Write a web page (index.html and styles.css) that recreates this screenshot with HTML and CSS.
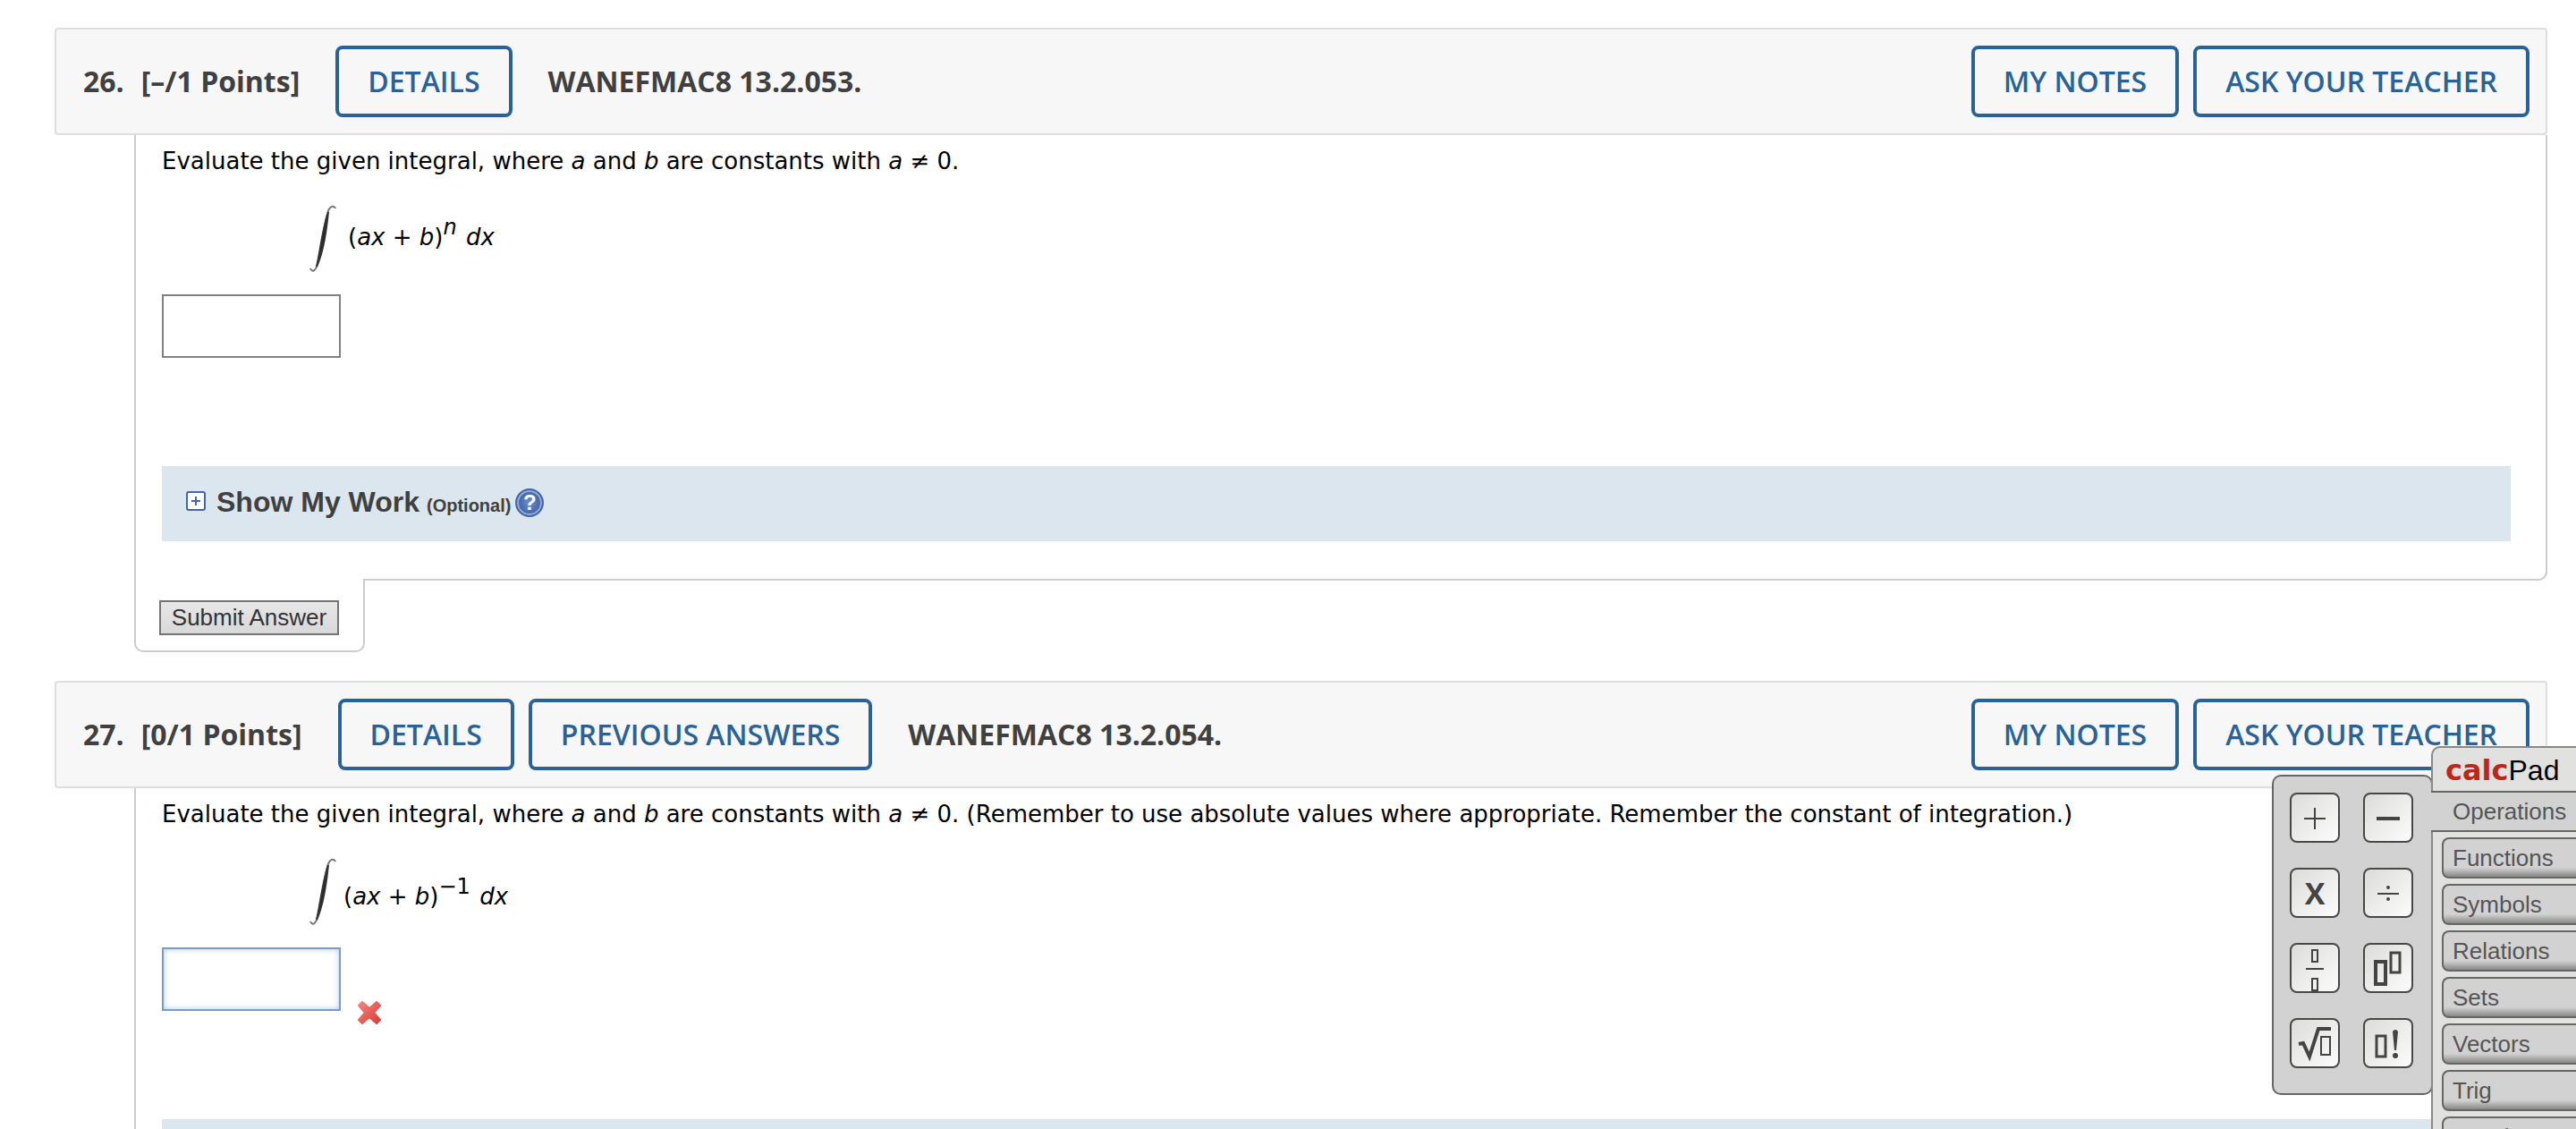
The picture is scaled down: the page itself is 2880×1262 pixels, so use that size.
FILE: index.html
```html
<!DOCTYPE html>
<html lang="en">
<head>
    <meta charset="UTF-8">
    <meta name="viewport" content="width=device-width, initial-scale=1.0">
    <title>Assignment</title>
    <link rel="stylesheet" href="styles.css">
</head>
<body>

<main class="assignment">
    <section class="question">
        <header class="question-header">
            <span class="number">26.</span>
            <span class="points">[–/1 Points]</span>
            <div class="button-group">
                <button type="button" class="btn">DETAILS</button>
            </div>
            <span class="source">WANEFMAC8 13.2.053.</span>
            <div class="button-group right">
                <button type="button" class="btn">MY NOTES</button>
                <button type="button" class="btn">ASK YOUR TEACHER</button>
            </div>
        </header>
        <div class="question-body">
            <p class="prompt">Evaluate the given integral, where <i>a</i> and <i>b</i> are constants with <i>a</i> ≠ 0.</p>
            <div class="formula">
                <svg class="integral" viewBox="0 0 30 76" aria-hidden="true">
                    <path d="M1 71 C3 76 7 74 9 66 C13 50 16 25 20 10 C22 1 27 0 29 4" fill="none" stroke="#777" stroke-width="2"/>
                    <path d="M8 69 C12 52 15 24 21 8 C19 28 16 52 8 69 Z" fill="#222" stroke="#333" stroke-width="2"/>
                </svg>
                <span>(<i>ax</i> + <i>b</i>)<sup><i>n</i></sup> <i>dx</i></span>
            </div>
            <div class="answer-row">
                <input type="text" class="answer" id="answer26" aria-label="Answer 26">
            </div>
            <div class="show-work">
                <button type="button" class="expand" aria-label="Expand">
                    <svg viewBox="0 0 22 22"><rect x="1" y="1" width="20" height="20" rx="2" fill="#fff" stroke="#4269a5" stroke-width="2"/><path d="M6 11h10M11 6v10" stroke="#4269a5" stroke-width="2"/></svg>
                </button>
                <span class="work-title">Show My Work</span>
                <span class="optional">(Optional)</span>
                <button type="button" class="help" aria-label="Help">?</button>
            </div>
        </div>
        <div class="submit-row">
            <div class="submit-tab">
                <button type="submit" class="submit">Submit Answer</button>
            </div>
            <div class="submit-rest"></div>
        </div>
    </section>

    <section class="question">
        <header class="question-header">
            <span class="number">27.</span>
            <span class="points">[0/1 Points]</span>
            <div class="button-group">
                <button type="button" class="btn">DETAILS</button>
                <button type="button" class="btn">PREVIOUS ANSWERS</button>
            </div>
            <span class="source">WANEFMAC8 13.2.054.</span>
            <div class="button-group right">
                <button type="button" class="btn">MY NOTES</button>
                <button type="button" class="btn">ASK YOUR TEACHER</button>
            </div>
        </header>
        <div class="question-body">
            <p class="prompt">Evaluate the given integral, where <i>a</i> and <i>b</i> are constants with <i>a</i> ≠ 0. (Remember to use absolute values where appropriate. Remember the constant of integration.)</p>
            <div class="formula formula-low">
                <svg class="integral" viewBox="0 0 30 76" aria-hidden="true">
                    <path d="M1 71 C3 76 7 74 9 66 C13 50 16 25 20 10 C22 1 27 0 29 4" fill="none" stroke="#777" stroke-width="2"/>
                    <path d="M8 69 C12 52 15 24 21 8 C19 28 16 52 8 69 Z" fill="#222" stroke="#333" stroke-width="2"/>
                </svg>
                <span>(<i>ax</i> + <i>b</i>)<sup>−1</sup> <i>dx</i></span>
            </div>
            <div class="answer-row">
                <input type="text" class="answer active" id="answer27" aria-label="Answer 27">
                <svg class="wrong" viewBox="0 0 28 28" role="img" aria-label="Incorrect">
                    <defs>
                        <linearGradient id="red" x1="0" y1="0" x2="1" y2="1">
                            <stop offset="0" stop-color="#f08580"/>
                            <stop offset="1" stop-color="#dd3b35"/>
                        </linearGradient>
                    </defs>
                    <path d="M6 2 L14 9 L22 2 L26 6 L19 14 L26 22 L22 26 L14 19 L6 26 L2 22 L9 14 L2 6 Z" fill="url(#red)" stroke="url(#red)" stroke-width="2" stroke-linejoin="round"/>
                </svg>
            </div>
            <div class="show-work"></div>
        </div>
    </section>
</main>

<aside class="calcpad">
    <div class="keys">
        <button type="button" class="key" aria-label="Plus"><svg viewBox="0 0 52 52"><path d="M14 27h24M26 15v24" stroke-width="2"/></svg></button>
        <button type="button" class="key" aria-label="Minus"><svg viewBox="0 0 52 52"><path d="M13 27h26" stroke-width="4"/></svg></button>
        <button type="button" class="key">X</button>
        <button type="button" class="key" aria-label="Divide"><svg viewBox="0 0 52 52"><path d="M14 27h24" stroke-width="2"/><circle cx="26" cy="20" r="2" fill="#444" stroke="none"/><circle cx="26" cy="33" r="2" fill="#444" stroke="none"/></svg></button>
        <button type="button" class="key" aria-label="Fraction"><svg viewBox="0 0 52 52"><path d="M23 6h6v13h-6zM16 27h20M23 38h6v13h-6z" stroke-width="2"/></svg></button>
        <button type="button" class="key" aria-label="Power"><svg viewBox="0 0 52 52"><path d="M12 19h11v25h-11z" stroke-width="4"/><path d="M29 9h10v22h-10z" stroke-width="3"/></svg></button>
        <button type="button" class="key" aria-label="Square root"><svg viewBox="0 0 52 52"><path d="M8 27l5-1 7 15L30 10h14" stroke-width="4"/><path d="M33 19h10v20h-10z" stroke-width="2"/></svg></button>
        <button type="button" class="key" aria-label="Factorial"><svg viewBox="0 0 52 52"><path d="M13 18h10v23h-10z" stroke-width="3"/><path d="M31 13q3-4 6 0l-2 21h-2z" fill="#444" stroke="none"/><circle cx="34" cy="40" r="3" fill="#444" stroke="none"/></svg></button>
    </div>
    <div class="pad-tabs">
        <div class="pad-title"><b>calc</b>Pad</div>
        <button type="button" class="pad-tab current">Operations</button>
        <button type="button" class="pad-tab">Functions</button>
        <button type="button" class="pad-tab">Symbols</button>
        <button type="button" class="pad-tab">Relations</button>
        <button type="button" class="pad-tab">Sets</button>
        <button type="button" class="pad-tab">Vectors</button>
        <button type="button" class="pad-tab">Trig</button>
        <button type="button" class="pad-tab">Greek</button>
    </div>
</aside>

</body>
</html>
```
FILE: styles.css
```css
* {
    box-sizing: border-box;
}

body {
    margin: 0;
    height: 100vh;
    overflow: hidden;
    background-color: #fff;
    font-family: Verdana, "DejaVu Sans", sans-serif;
    font-size: 26px;
    color: #000;
}

button {
    margin: 0;
    padding: 0;
    cursor: pointer;
}

.assignment {
    padding: 31px 32px 0 61px;
}

.question {
    margin-bottom: 32px;
}

/* header bar */
.question-header {
    display: flex;
    align-items: center;
    height: 120px;
    padding: 0 18px 0 30px;
    background-color: #f7f7f7;
    border: 2px solid #dedede;
    border-radius: 4px;
    font-family: "Open Sans", sans-serif;
    font-size: 32px;
    font-weight: 700;
    color: #404040;
}

.number,
.points,
.source {
    padding-bottom: 2px;
}

.points {
    margin: 0 40px 0 19px;
}

.button-group {
    display: flex;
    gap: 16px;
}

.button-group.right {
    margin-left: auto;
}

.btn {
    height: 80px;
    padding: 0 32px 2px;
    background-color: transparent;
    border: 4px solid #286297;
    border-radius: 8px;
    font-family: "Open Sans", sans-serif;
    font-size: 32px;
    font-weight: 600;
    color: #286297;
}

.source {
    margin-left: 40px;
}

/* question body */
.question-body {
    height: 498px;
    margin-left: 89px;
    padding: 12px 39px 0 29px;
    border-left: 2px solid #ccc;
    border-right: 2px solid #ccc;
    border-bottom-right-radius: 10px;
}

.prompt {
    margin: 0;
    line-height: 34px;
}

.formula {
    display: flex;
    align-items: center;
    gap: 13px;
    height: 76px;
    margin: 32px 0 24px 165px;
}

.formula span {
    padding-bottom: 4px;
}

.formula-low {
    gap: 8px;
}

.formula-low span {
    padding: 10px 0 0;
}

.formula sup {
    margin-right: 2px;
    font-size: 24px;
    line-height: 0;
    vertical-align: 12px;
}

.integral {
    width: 30px;
    height: 76px;
}

.answer-row {
    display: flex;
    gap: 18px;
    height: 192px;
}

.answer {
    width: 200px;
    height: 71px;
    padding: 0 10px;
    border: 2px solid #808080;
    font-size: 26px;
}

.answer.active {
    border-color: #7b9bc2;
    box-shadow: inset 0 0 6px #a9c8f0;
}

.wrong {
    width: 28px;
    height: 28px;
    margin-top: 59px;
}

.show-work {
    display: flex;
    align-items: flex-start;
    height: 84px;
    padding: 22px 27px 0;
    background-color: #dce6ee;
    font-family: Arial, "Liberation Sans", sans-serif;
    font-weight: bold;
    line-height: 36px;
    color: #404040;
}

.expand {
    width: 22px;
    height: 22px;
    margin: 6px 12px 0 0;
    background: none;
    border: none;
}

.expand svg {
    display: block;
}

.work-title {
    font-size: 32px;
}

.optional {
    margin: 4px 5px 0 8px;
    font-size: 20px;
}

.help {
    width: 32px;
    height: 32px;
    margin-top: 3px;
    background: radial-gradient(#6d8fcc, #2b4c93);
    border: 2px solid #4467a8;
    border-radius: 50%;
    box-shadow: inset 0 0 0 2px #93add9;
    font-family: Arial, "Liberation Sans", sans-serif;
    font-size: 24px;
    font-weight: bold;
    line-height: 28px;
    color: #fff;
}

/* submit tab hanging under the body */
.submit-row {
    display: flex;
    height: 80px;
    margin-left: 89px;
}

.submit-tab {
    width: 258px;
    padding: 22px 0 0 26px;
    border: 2px solid #ccc;
    border-top: none;
    border-radius: 0 0 10px 10px;
}

.submit-rest {
    flex: 1;
    height: 12px;
    margin: -12px 0 0 -2px;
    border-bottom: 2px solid #ccc;
    border-right: 2px solid #ccc;
    border-bottom-right-radius: 10px;
}

.submit {
    width: 201px;
    height: 39px;
    padding-bottom: 2px;
    background: linear-gradient(#e8e8e8, #d8d8d8);
    border: 2px solid #747474;
    font-family: Arial, "Liberation Sans", sans-serif;
    font-size: 26px;
    line-height: 32px;
    color: #333;
}

/* floating calcPad */
.calcpad {
    position: fixed;
    top: 834px;
    right: 0;
    bottom: 0;
    display: flex;
    align-items: flex-start;
    overflow: hidden;
    font-family: Arial, "Liberation Sans", sans-serif;
}

/* the tabs cover the right border, so the current one opens into the keys */
.keys {
    display: grid;
    grid-template-columns: 56px 56px;
    gap: 28px 26px;
    margin: 32px -2px 0 0;
    padding: 18px 20px 28px 18px;
    background-color: #d2d2d2;
    border: 2px solid #666;
    border-radius: 10px;
}

.key {
    height: 56px;
    background: linear-gradient(135deg, #dcdcda, #fcfcfc);
    border: 2px solid #484848;
    border-radius: 8px;
    font-family: "Open Sans", sans-serif;
    font-size: 34px;
    font-weight: bold;
    line-height: 52px;
    color: #444;
}

.key svg {
    display: block;
    width: 52px;
    height: 52px;
    fill: none;
    stroke: #444;
}

.pad-tabs {
    display: flex;
    flex-direction: column;
    gap: 6px;
    width: 162px;
    padding-left: 10px;
    background-color: #e1e1df;
    border-top: 2px solid #888;
    border-left: 2px solid #888;
    border-top-left-radius: 10px;
}

.pad-title {
    height: 48px;
    margin-bottom: -6px;
    padding-left: 4px;
    font-size: 32px;
    line-height: 50px;
}

.pad-title b {
    font-family: "DejaVu Sans", sans-serif;
    color: #bb271a;
}

.pad-tab {
    flex: none;
    height: 46px;
    padding: 0 0 0 10px;
    background: linear-gradient(#d2d2d2 76%, #888);
    border: 2px solid #666;
    border-right: none;
    border-radius: 8px 0 0 8px;
    font-family: Arial, "Liberation Sans", sans-serif;
    font-size: 26px;
    text-align: left;
    color: #555;
}

.pad-tab.current {
    margin-left: -12px;
    padding-left: 24px;
    background: #d2d2d2;
    border-left: none;
    border-radius: 0;
}
```
